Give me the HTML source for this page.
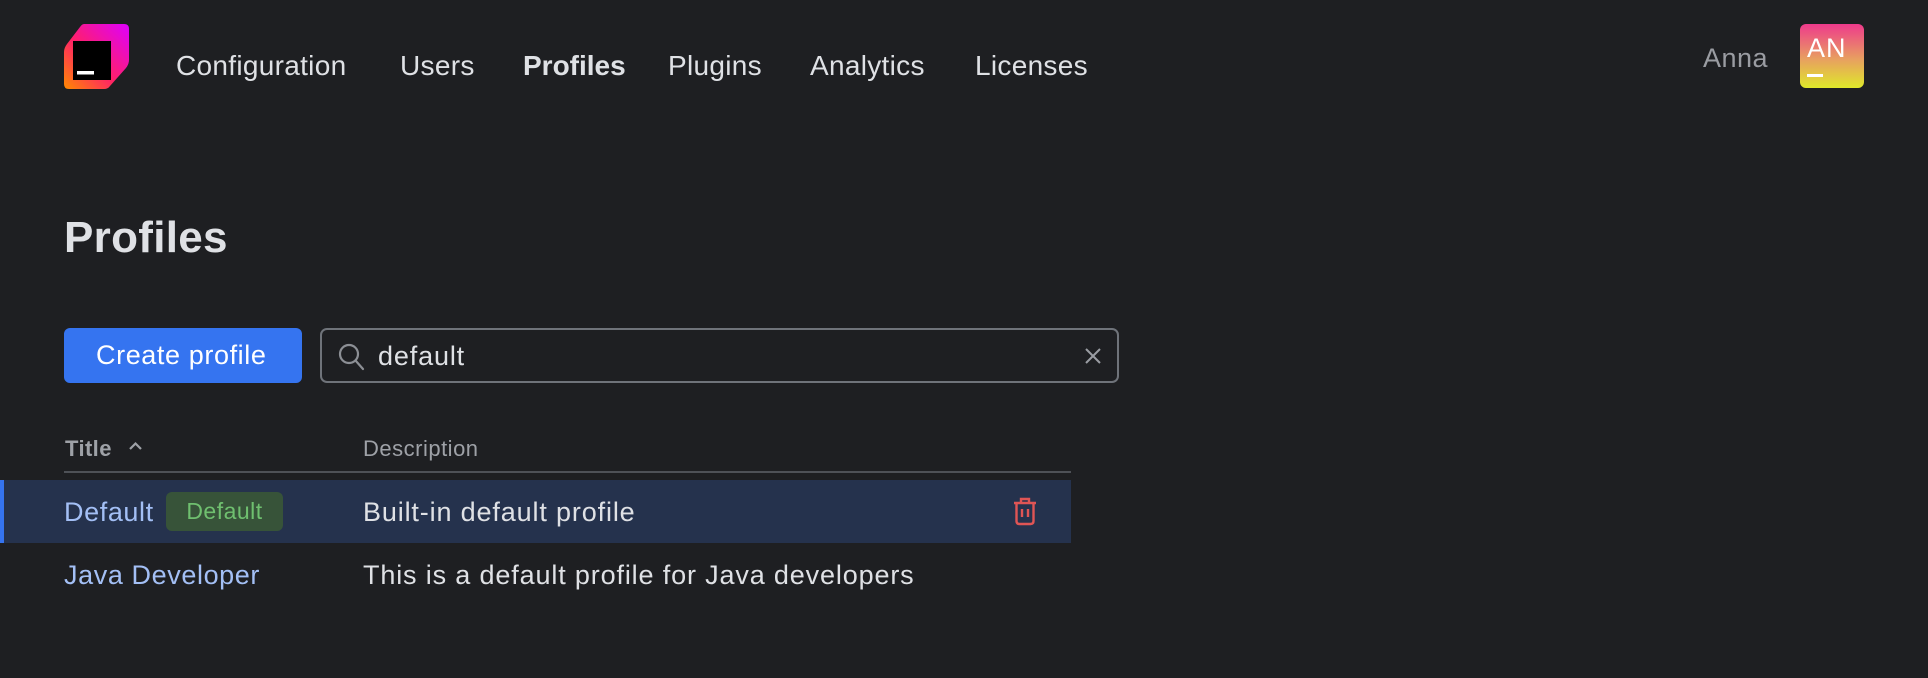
<!DOCTYPE html>
<html><head><meta charset="utf-8"><style>
*{margin:0;padding:0;box-sizing:border-box}
html,body{width:1928px;height:678px;background:#1e1f22;overflow:hidden;font-family:"Liberation Sans",sans-serif;color:#dfe1e5}
.a{position:absolute;white-space:nowrap}
.nav{font-size:28px;letter-spacing:0.3px;line-height:34px;top:49px;color:#dfe1e5}
.t{font-size:27px;letter-spacing:0.85px;line-height:32px}
</style></head><body>
<svg class="a" style="left:64px;top:24px" width="65" height="65" viewBox="0 0 65 65">
<defs><linearGradient id="g" x1="0" y1="1" x2="1" y2="0"><stop offset="0" stop-color="#ff8a00"/><stop offset="0.45" stop-color="#ff1f6a"/><stop offset="1" stop-color="#dd00ff"/></linearGradient></defs>
<path d="M20 0H60Q65 0 65 5V36Q65 40 62 44L46 62Q44 65 40 65H5Q0 65 0 60V28Q0 24 3 20L16 3Q18 0 20 0Z" fill="url(#g)"/>
<rect x="9" y="17" width="38" height="39" fill="#000"/>
<rect x="13" y="47" width="17" height="3.5" fill="#fff"/>
</svg>
<div class="a nav" style="left:176px">Configuration</div>
<div class="a nav" style="left:400px">Users</div>
<div class="a nav" style="left:523px;font-weight:bold;letter-spacing:0">Profiles</div>
<div class="a nav" style="left:668px">Plugins</div>
<div class="a nav" style="left:810px">Analytics</div>
<div class="a nav" style="left:975px">Licenses</div>
<div class="a" style="left:1703px;top:43px;font-size:27px;color:#9a9ca2;letter-spacing:0.5px">Anna</div>
<div class="a" style="left:1800px;top:24px;width:64px;height:64px;border-radius:6px;background:linear-gradient(#ee3a8c,#e8a060 55%,#dfe82a)">
<div class="a" style="left:7px;top:9px;color:#fff;font-size:27px;letter-spacing:1px">AN</div>
<div class="a" style="left:7px;top:50px;width:16px;height:3px;background:#fff"></div>
</div>
<div class="a" style="left:64px;top:213px;font-size:44px;font-weight:bold;color:#dfe1e5;letter-spacing:0.3px">Profiles</div>
<div class="a" style="left:64px;top:328px;width:238px;height:55px;border-radius:6px;background:#3574f0;color:#fff"><div class="a t" style="left:32px;top:11px;letter-spacing:0.6px">Create profile</div></div>
<div class="a" style="left:320px;top:328px;width:799px;height:55px;border-radius:7px;border:2px solid #6f737a">
<svg class="a" style="left:14px;top:12px" width="30" height="30" viewBox="0 0 30 30"><circle cx="13" cy="12" r="9" fill="none" stroke="#8c8f95" stroke-width="2.2"/><path d="M19.5 18.5L27 27" stroke="#8c8f95" stroke-width="2.2" stroke-linecap="round"/></svg>
<div class="a t" style="left:56px;top:10px;color:#dfe1e5">default</div>
<svg class="a" style="left:762px;top:17px" width="18" height="18" viewBox="0 0 18 18"><path d="M2 2L16 16M16 2L2 16" stroke="#9a9da3" stroke-width="2"/></svg>
</div>
<div class="a" style="left:65px;top:436px;font-size:22px;font-weight:bold;color:#9ea1a7;letter-spacing:0.4px">Title</div>
<svg class="a" style="left:128px;top:441px" width="15" height="10" viewBox="0 0 15 10"><path d="M2 8L7.5 2.5L13 8" fill="none" stroke="#9ea1a7" stroke-width="2.2"/></svg>
<div class="a" style="left:363px;top:436px;font-size:22px;color:#9ea1a7;letter-spacing:0.5px">Description</div>
<div class="a" style="left:64px;top:471px;width:1007px;height:2px;background:#4e5157"></div>
<div class="a" style="left:0;top:480px;width:1071px;height:63px;background:#25324d"></div>
<div class="a" style="left:0;top:480px;width:4px;height:63px;background:#3574f0"></div>
<div class="a t" style="left:64px;top:496px;color:#a3bff5;letter-spacing:0.6px">Default</div>
<div class="a" style="left:166px;top:492px;width:117px;height:39px;border-radius:6px;background:#375339;color:#6fbf6f;font-size:23px;letter-spacing:0.5px;line-height:39px;text-align:center">Default</div>
<div class="a t" style="left:363px;top:496px">Built-in default profile</div>
<svg class="a" style="left:1012px;top:496px" width="26" height="30" viewBox="0 0 26 30"><g fill="none" stroke="#e05555" stroke-width="2.4"><path d="M2 7H24"/><path d="M9 7V3H17V7"/><path d="M4.5 7V25Q4.5 28 7.5 28H18.5Q21.5 28 21.5 25V7"/><path d="M10 13V21M16 13V21"/></g></svg>
<div class="a t" style="left:64px;top:559px;color:#a3bff5;letter-spacing:0.6px">Java Developer</div>
<div class="a t" style="left:363px;top:559px">This is a default profile for Java developers</div>
</body></html>
